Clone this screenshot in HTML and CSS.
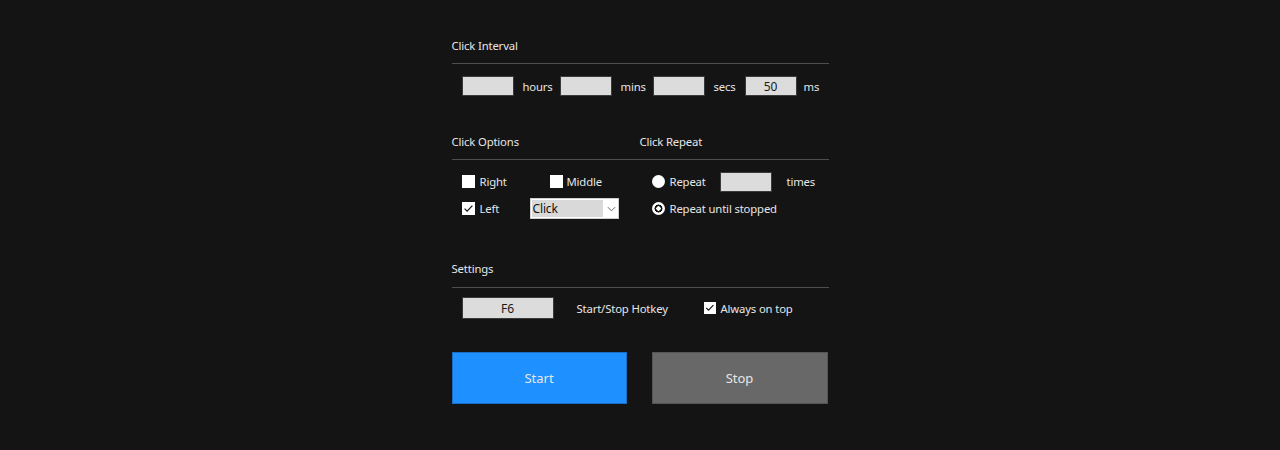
FILE: index.html
```html
<!DOCTYPE html>
<html>
<head>
<meta charset="utf-8">
<link rel="stylesheet" href="styles.css">
</head>
<body>
<div class="app">
  <section class="sec sec-interval">
    <div class="heading">Click Interval</div>
    <div class="divider"></div>
    <div class="row interval-row">
      <input class="field f-num" type="text" value="">
      <span class="unit u-hours">hours</span>
      <input class="field f-num" type="text" value="">
      <span class="unit u-mins">mins</span>
      <input class="field f-num" type="text" value="">
      <span class="unit u-secs">secs</span>
      <input class="field f-num" type="text" value="50">
      <span class="unit u-ms">ms</span>
    </div>
  </section>

  <section class="sec sec-options">
    <div class="heads">
      <div class="heading col-left">Click Options</div>
      <div class="heading">Click Repeat</div>
    </div>
    <div class="divider"></div>
    <div class="cols">
      <div class="col-left opts">
        <div class="opt-row r1">
          <span class="check"></span><span class="lbl w-right">Right</span>
          <span class="check"></span><span class="lbl l-middle">Middle</span>
        </div>
        <div class="opt-row r2">
          <span class="check on"><svg viewBox="0 0 13 13" width="13" height="13"><path d="M2.6 6.6 L5.1 9.1 L10.4 3.6" fill="none" stroke="#111" stroke-width="1.2"/></svg></span><span class="lbl w-left">Left</span>
          <div class="select"><span class="sel-text">Click</span><svg class="chev" viewBox="0 0 10 6" width="9" height="6"><path d="M1 1 L5 5 L9 1" fill="none" stroke="#555" stroke-width="1"/></svg></div>
        </div>
      </div>
      <div class="repeat">
        <div class="opt-row r1">
          <span class="radio"></span><span class="lbl w-repeat">Repeat</span>
          <input class="field f-num f-times" type="text" value="">
          <span class="lbl times">times</span>
        </div>
        <div class="opt-row r2">
          <span class="radio on"></span><span class="lbl">Repeat until stopped</span>
        </div>
      </div>
    </div>
  </section>

  <section class="sec sec-settings">
    <div class="heading">Settings</div>
    <div class="divider"></div>
    <div class="row settings-row">
      <input class="field f-hotkey" type="text" value="F6">
      <span class="lbl hotkey-lbl">Start/Stop Hotkey</span>
      <span class="check on small"><svg viewBox="0 0 13 13" width="12" height="12"><path d="M2.4 6.4 L4.9 8.9 L10.2 3.4" fill="none" stroke="#111" stroke-width="1.2"/></svg></span><span class="lbl">Always on top</span>
    </div>
  </section>

  <div class="buttons">
    <button class="btn btn-start">Start</button>
    <button class="btn btn-stop">Stop</button>
  </div>
</div>
</body>
</html>
```

FILE: styles.css
```css
html, body {
  margin: 0;
  padding: 0;
  background: #141414;
}
body {
  font-family: "Noto Sans", "Open Sans", sans-serif;
  font-size: 11.3px;
  letter-spacing: -0.15px;
  color: #e6e6e6;
  height: 450px;
  overflow: hidden;
}
.app {
  width: 377px;
  margin: 0 auto;
  padding-top: 38px;
  box-sizing: border-box;
}
.heading {
  line-height: 16px;
  height: 16px;
}
.divider {
  height: 1px;
  background: #4e4e4e;
  margin-top: 9px;
}
.row {
  display: flex;
  align-items: center;
}
.interval-row {
  margin-top: 12px;
  padding-left: 10px;
  height: 20px;
}
.field {
  box-sizing: border-box;
  background: #dcdcdc;
  border: 1px solid #3a3a3a;
  outline: none;
  margin: 0;
  padding: 0;
  font-family: inherit;
  font-size: 12px;
  color: #1a1a1a;
  text-align: center;
}
.f-num {
  width: 52px;
  height: 20px;
}
.unit {
  margin-left: 9px;
  flex: none;
}
.u-hours { width: 37px; }
.u-mins { width: 32px; }
.u-secs { width: 31px; }
.u-ms { margin-left: 7px; }
.sec-options {
  margin-top: 38px;
}
.heads {
  display: flex;
}
.col-left {
  width: 188px;
  flex: none;
}
.sec-options .divider {
  margin-top: 9px;
}
.cols {
  display: flex;
  margin-top: 12px;
}
.opts {
  padding-left: 10px;
  box-sizing: border-box;
}
.repeat {
  padding-left: 12px;
}
.opt-row {
  display: flex;
  align-items: center;
}
.r1 {
  height: 19px;
}
.r2 {
  height: 21px;
  margin-top: 7px;
}
.check {
  width: 13px;
  height: 13px;
  background: #ffffff;
  flex: none;
  display: inline-flex;
}
.check.small {
  width: 12px;
  height: 12px;
}
.lbl {
  margin-left: 5px;
  flex: none;
}
.l-middle {
  margin-left: 4px;
}
.w-right {
  width: 70px;
}
.w-left {
  width: 50px;
}
.select {
  box-sizing: border-box;
  width: 89px;
  height: 21px;
  background: #ffffff;
  border: 1px solid #cfcfcf;
  display: flex;
  align-items: center;
  padding: 1px;
}
.sel-text {
  background: #d9d9d9;
  width: 71px;
  height: 100%;
  color: #111;
  display: flex;
  align-items: center;
  font-size: 12px;
  padding-left: 1px;
  box-sizing: border-box;
}
.chev {
  margin-left: 4px;
}
.radio {
  width: 13px;
  height: 13px;
  border-radius: 50%;
  background: #ffffff;
  flex: none;
}
.radio.on {
  background: radial-gradient(circle, #ffffff 0 2px, #111111 2.4px 3.8px, #ffffff 4.2px);
}
.w-repeat {
  width: 50px;
}
.f-times {
  height: 20px;
}
.times {
  margin-left: 15px;
}
.sec-settings {
  margin-top: 42px;
}
.sec-settings .divider {
  margin-top: 10px;
}
.settings-row {
  margin-top: 9px;
  padding-left: 10px;
  height: 22px;
}
.f-hotkey {
  width: 92px;
  height: 22px;
}
.hotkey-lbl {
  margin-left: 23px;
  width: 127px;
}
.buttons {
  display: flex;
  gap: 25px;
  margin-top: 33px;
}
.btn {
  box-sizing: border-box;
  height: 52px;
  font-family: inherit;
  font-size: 13px;
  letter-spacing: 0;
  color: #e6e6e6;
  margin: 0;
  padding: 0;
}
.btn-start {
  width: 175px;
  background: #1e90ff;
  border: 1px solid #1a6fc4;
}
.btn-stop {
  width: 176px;
  background: #686868;
  border: 1px solid #555555;
}
```
